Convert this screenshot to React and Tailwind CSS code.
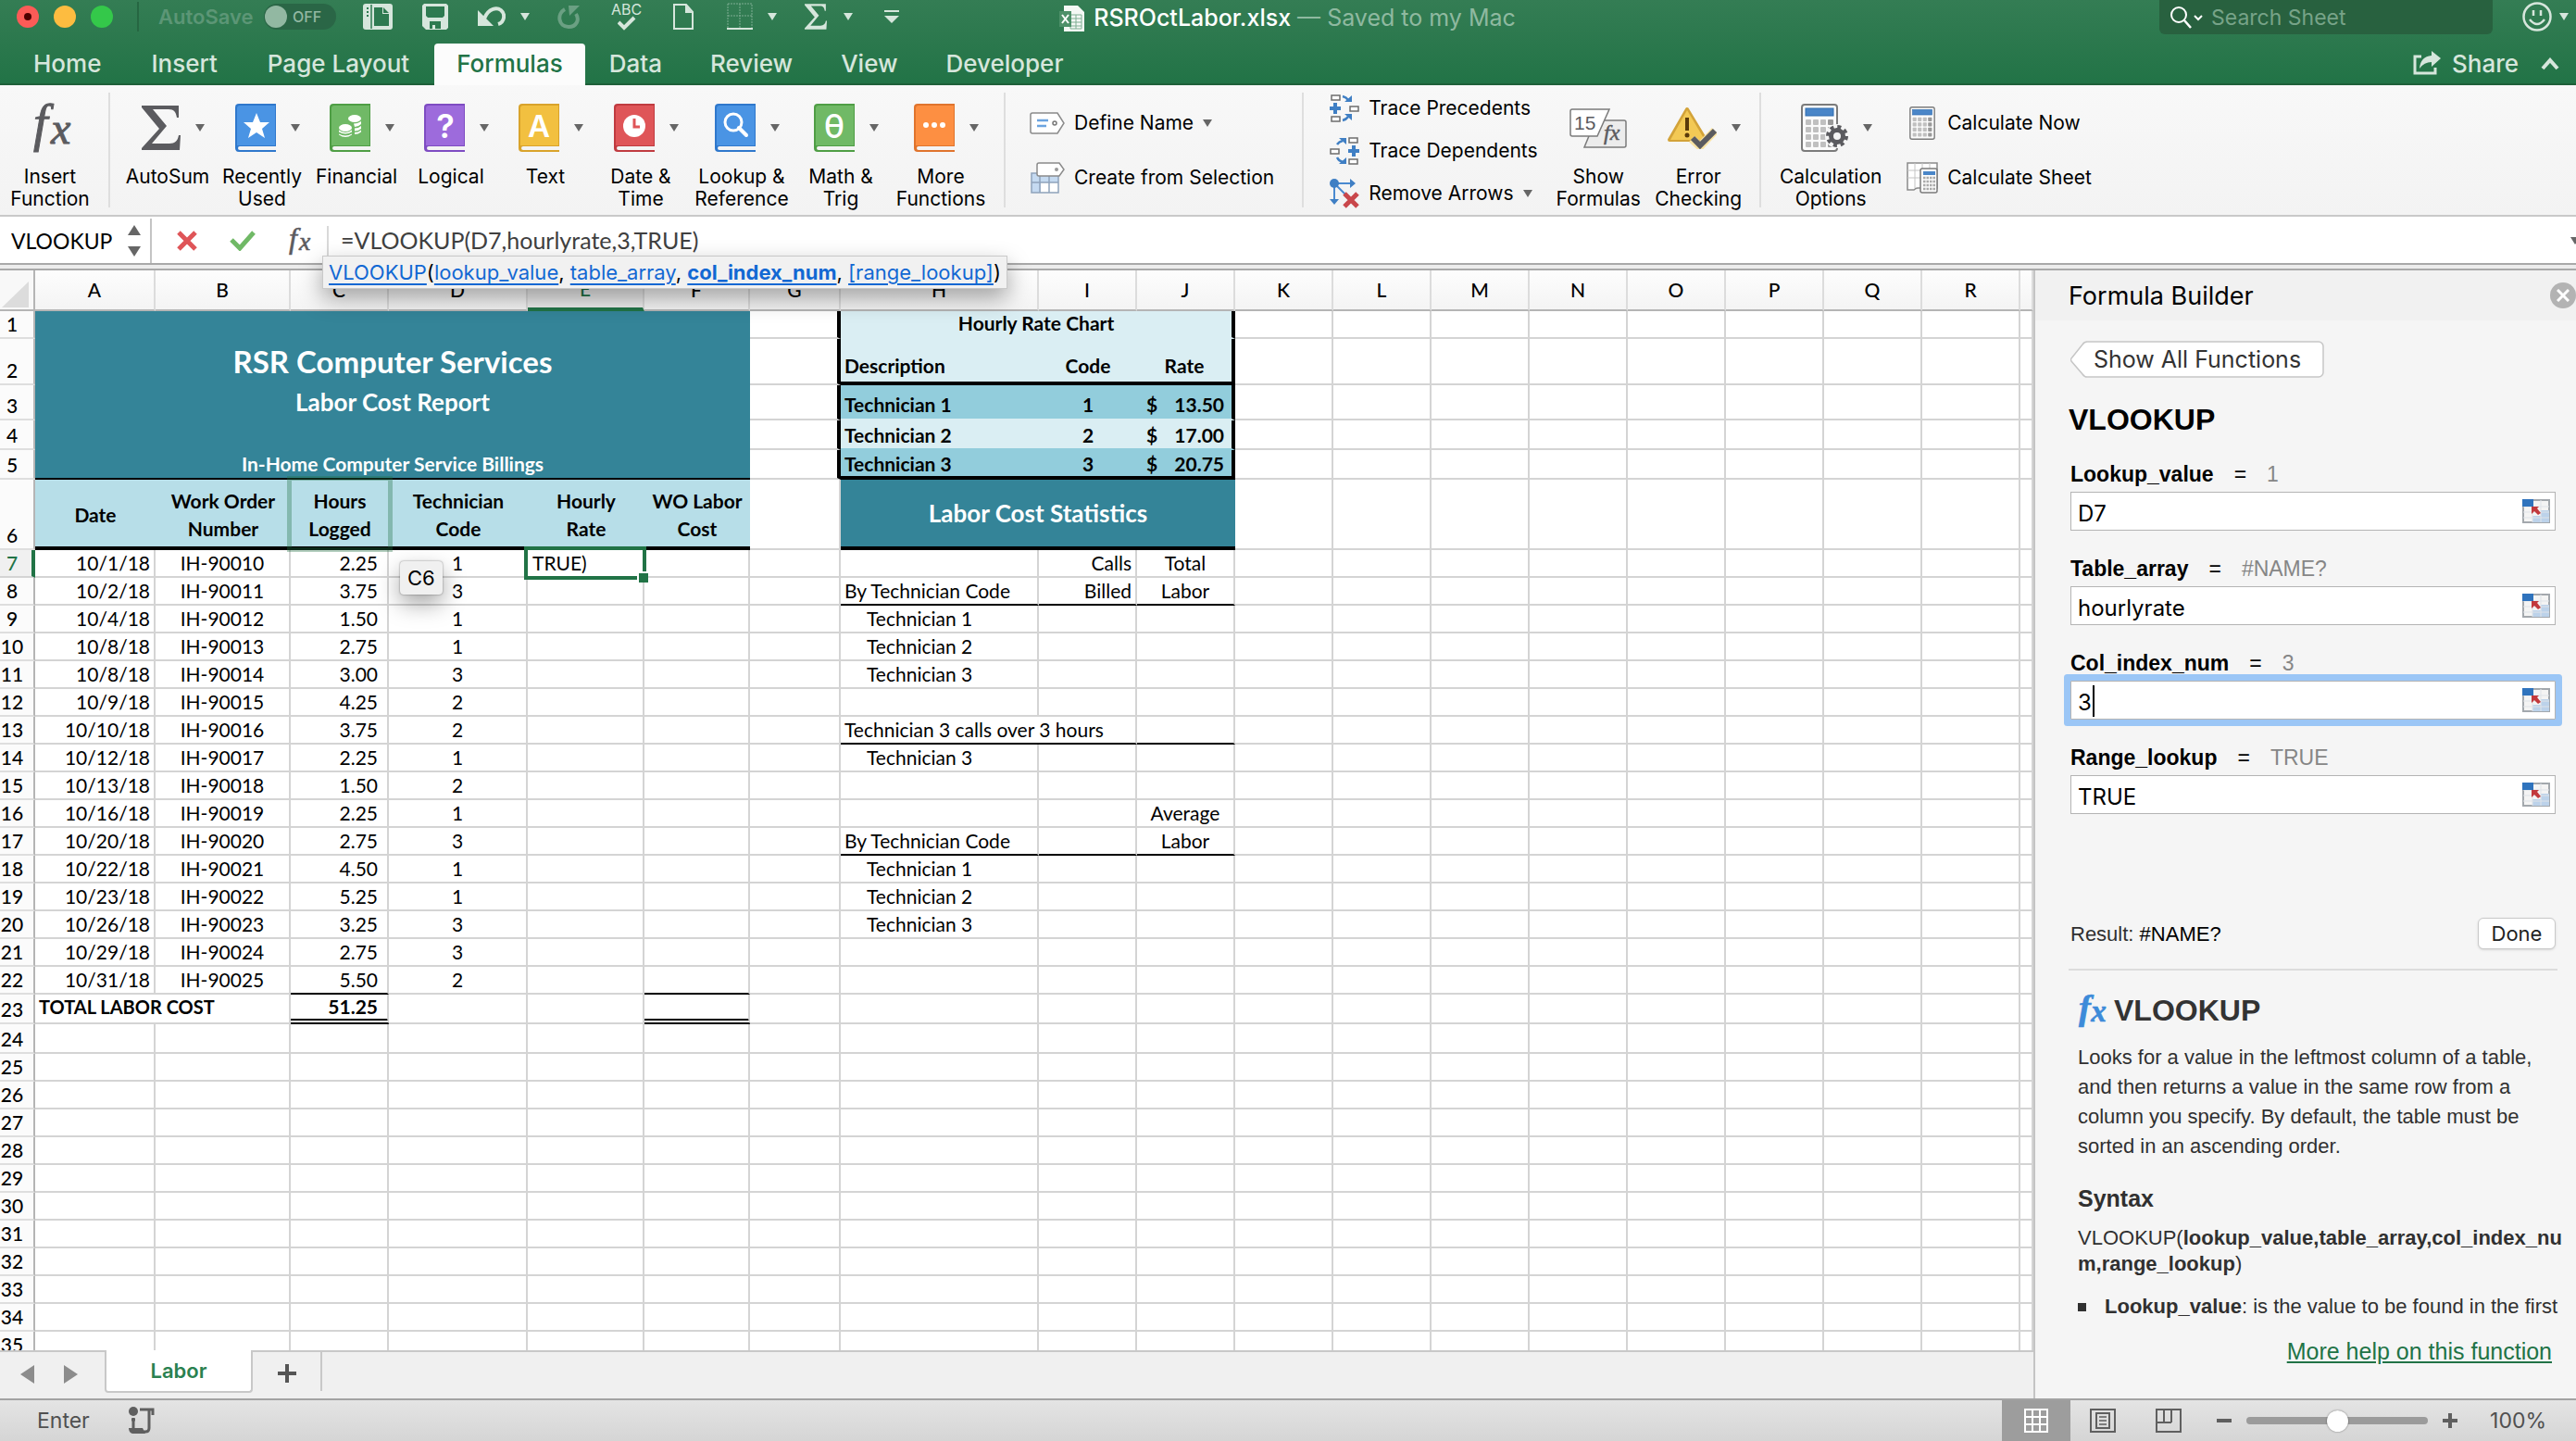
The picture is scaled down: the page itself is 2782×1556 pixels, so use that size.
import React from 'react';

const COLUMNS = [
  { id: 'A', w: 'w-[130px]' },
  { id: 'B', w: 'w-[146px]' },
  { id: 'C', w: 'w-[106px]' },
  { id: 'D', w: 'w-[150px]' },
  { id: 'E', w: 'w-[126px]' },
  { id: 'F', w: 'w-[114px]' },
  { id: 'G', w: 'w-[98px]' },
  { id: 'H', w: 'w-[214px]' },
  { id: 'I', w: 'w-[106px]' },
  { id: 'J', w: 'w-[106px]' },
  { id: 'K', w: 'w-[106px]' },
  { id: 'L', w: 'w-[106px]' },
  { id: 'M', w: 'w-[106px]' },
  { id: 'N', w: 'w-[106px]' },
  { id: 'O', w: 'w-[106px]' },
  { id: 'P', w: 'w-[106px]' },
  { id: 'Q', w: 'w-[106px]' },
  { id: 'R', w: 'w-[106px]' },
  { id: '', w: '' },
];

const ROW_HEIGHTS = {
  2: 'h-[50px]',
  3: 'h-[38px]',
  4: 'h-8',
  5: 'h-8',
  6: 'h-[76px]',
  23: 'h-8',
  24: 'h-8',
};

const GRID = 'border-r-2 border-b-2 border-[#d4d4d4]';
const LINE_BELOW = 'border-r-2 border-b-2 border-r-[#d4d4d4] border-b-black';
const TEAL = 'border-b-2 border-[#348498] bg-[#348498] text-white font-bold text-center';
const HEAD = 'border-b-4 border-black bg-[#b7dee8] font-bold text-center !align-middle !leading-[30px] pt-1';
const G_EDGE = 'border-r-4 border-b-2 border-r-black border-b-[#d4d4d4]';
const BOX_RIGHT = 'border-r-4 border-b-2 border-r-black';
const TOTAL = 'border-r-2 border-r-[#d4d4d4] border-b-[6px] border-b-black [border-bottom-style:double] !pb-0';

const workOrders = [
  ['10/1/18', 'IH-90010', '2.25', '1'],
  ['10/2/18', 'IH-90011', '3.75', '3'],
  ['10/4/18', 'IH-90012', '1.50', '1'],
  ['10/8/18', 'IH-90013', '2.75', '1'],
  ['10/8/18', 'IH-90014', '3.00', '3'],
  ['10/9/18', 'IH-90015', '4.25', '2'],
  ['10/10/18', 'IH-90016', '3.75', '2'],
  ['10/12/18', 'IH-90017', '2.25', '1'],
  ['10/13/18', 'IH-90018', '1.50', '2'],
  ['10/16/18', 'IH-90019', '2.25', '1'],
  ['10/20/18', 'IH-90020', '2.75', '3'],
  ['10/22/18', 'IH-90021', '4.50', '1'],
  ['10/23/18', 'IH-90022', '5.25', '1'],
  ['10/26/18', 'IH-90023', '3.25', '3'],
  ['10/29/18', 'IH-90024', '2.75', '3'],
  ['10/31/18', 'IH-90025', '5.50', '2'],
];

const Money = ({ children }) => (
  <span className="flex justify-between pl-[10px] pr-2">
    <span>$</span>
    <span>{children}</span>
  </span>
);

const tech = (n) => ({ t: `Technician ${n}`, c: 'pl-7' });

const cells = {
  1: {
    A: { span: 6, b: TEAL },
    G: { b: G_EDGE },
    H: { span: 3, t: 'Hourly Rate Chart', b: `${BOX_RIGHT} border-b-[#daeef3] bg-[#daeef3]`, c: 'font-bold text-center !pb-[2px]' },
  },
  2: {
    A: { span: 6, t: 'RSR Computer Services', b: TEAL, c: 'text-[33px] !align-middle' },
    G: { b: G_EDGE },
    H: { t: 'Description', b: 'border-b-4 border-black bg-[#daeef3]', c: 'font-bold pl-1 !pb-1' },
    I: { t: 'Code', b: 'border-b-4 border-black bg-[#daeef3]', c: 'font-bold text-center !pb-1' },
    J: { t: 'Rate', b: 'border-b-4 border-r-4 border-black bg-[#daeef3]', c: 'font-bold text-center !pb-1' },
  },
  3: {
    A: { span: 6, t: 'Labor Cost Report', b: TEAL, c: 'text-[26px] !align-middle' },
    G: { b: G_EDGE },
    H: { t: 'Technician 1', b: 'border-b-2 border-[#daeef3] bg-[#92cddc]', c: 'font-bold pl-1 !pb-[2px]' },
    I: { t: '1', b: 'border-b-2 border-[#daeef3] bg-[#92cddc]', c: 'font-bold text-center !pb-[2px]' },
    J: { t: <Money>13.50</Money>, b: `${BOX_RIGHT} border-b-[#daeef3] bg-[#92cddc]`, c: 'font-bold !pb-[2px]' },
  },
  4: {
    A: { span: 6, b: TEAL },
    G: { b: G_EDGE },
    H: { t: 'Technician 2', b: 'border-b-2 border-[#92cddc] bg-[#daeef3]', c: 'font-bold pl-1' },
    I: { t: '2', b: 'border-b-2 border-[#92cddc] bg-[#daeef3]', c: 'font-bold text-center' },
    J: { t: <Money>17.00</Money>, b: `${BOX_RIGHT} border-b-[#92cddc] bg-[#daeef3]`, c: 'font-bold' },
  },
  5: {
    A: { span: 6, t: 'In-Home Computer Service Billings', b: 'border-b-2 border-black bg-[#348498] text-white font-bold text-center !pb-[2px]' },
    G: { b: G_EDGE },
    H: { t: 'Technician 3', b: 'border-b-4 border-black bg-[#92cddc]', c: 'font-bold pl-1 !pb-0' },
    I: { t: '3', b: 'border-b-4 border-black bg-[#92cddc]', c: 'font-bold text-center !pb-0' },
    J: { t: <Money>20.75</Money>, b: 'border-b-4 border-r-4 border-black bg-[#92cddc]', c: 'font-bold !pb-0' },
  },
  6: {
    A: { t: 'Date', b: HEAD },
    B: { t: <>Work Order<br />Number</>, b: HEAD },
    C: {
      t: (
        <>
          Hours<br />Logged
          <span className="absolute -inset-x-1 -top-1 -bottom-[6px] border-[5px] border-[#217346]/35" />
        </>
      ),
      b: HEAD,
      c: 'relative',
    },
    D: { t: <>Technician<br />Code</>, b: HEAD },
    E: { t: <>Hourly<br />Rate</>, b: HEAD },
    F: { t: <>WO Labor<br />Cost</>, b: HEAD },
    H: { span: 3, t: 'Labor Cost Statistics', b: 'border-b-4 border-black bg-[#348498] text-white', c: 'font-bold text-center text-[26px] !align-middle' },
  },
  7: {
    D: {
      t: (
        <>
          1
          <span className="absolute left-3 top-3 rounded-sm bg-[#f0f0f0] px-2 py-[5px] font-[Inter,sans-serif] text-[22px] leading-[26px] shadow-[0_0_2px_rgba(0,0,0,.5),0_10px_24px_rgba(0,0,0,.35)]">
            C6
          </span>
        </>
      ),
      c: 'text-center relative',
    },
    E: {
      t: (
        <>
          TRUE)
          <span className="absolute -inset-x-1 -top-1 -bottom-1 border-4 border-[#217346]" />
          <span className="absolute -bottom-[7px] -right-[6px] size-3 border-l-2 border-t-2 border-white bg-[#217346]" />
        </>
      ),
      c: 'relative pl-[5px]',
    },
    I: { t: 'Calls', c: 'text-right pr-1' },
    J: { t: 'Total', c: 'text-center' },
  },
  8: {
    H: { t: 'By Technician Code', b: LINE_BELOW, c: 'pl-1' },
    I: { t: 'Billed', b: LINE_BELOW, c: 'text-right pr-1' },
    J: { t: 'Labor', b: LINE_BELOW, c: 'text-center' },
  },
  9: { H: tech(1) },
  10: { H: tech(2) },
  11: { H: tech(3) },
  13: {
    H: { span: 2, t: 'Technician 3 calls over 3 hours', b: LINE_BELOW, c: 'pl-1' },
    J: { b: LINE_BELOW },
  },
  14: { H: tech(3) },
  16: { J: { t: 'Average', c: 'text-center' } },
  17: {
    H: { t: 'By Technician Code', b: LINE_BELOW, c: 'pl-1' },
    I: { b: LINE_BELOW },
    J: { t: 'Labor', b: LINE_BELOW, c: 'text-center' },
  },
  18: { H: tech(1) },
  19: { H: tech(2) },
  20: { H: tech(3) },
  22: { F: { b: LINE_BELOW } },
  23: {
    A: { span: 2, t: 'TOTAL LABOR COST', c: 'font-bold pl-1 text-[20px] !pb-1' },
    C: { t: '51.25', b: TOTAL, c: 'font-bold text-right pr-[10px]' },
    F: { b: TOTAL },
  },
};

workOrders.forEach(([date, order, hours, code], i) => {
  const n = i + 7;
  cells[n] = {
    A: { t: date, c: 'text-right pr-1' },
    B: { t: order, c: 'text-center' },
    C: { t: hours, b: n === 22 ? LINE_BELOW : GRID, c: 'text-right pr-[10px]' },
    D: { t: code, c: 'text-center' },
    ...cells[n],
  };
});

const Caret = ({ className = 'border-t-[#666]' }) => (
  <span className={`inline-block border-x-[5px] border-t-8 border-x-transparent ${className}`} />
);

const FxIcon = ({ className, fill = '#5b5b5f' }) => (
  <svg viewBox="0 0 50 52" className={`overflow-visible ${className}`} aria-hidden="true">
    <g fill={fill} stroke={fill} strokeWidth="1" fontFamily="Liberation Serif, serif" fontStyle="italic">
      <text x="7" y="40" fontSize="56">f</text>
      <text x="26" y="43" fontSize="48">x</text>
    </g>
  </svg>
);

const Sigma = ({ className, fill }) => (
  <svg viewBox="0 0 42 48" className={className} aria-hidden="true">
    <path fill={fill} d="M0 0h40v13h-2c-1-6-3-9-9-9H12l15 18L11 41h19c6 0 9-3 10-9h2l-1 16H0v-2l19-21L0 2z" />
  </svg>
);

const Book = ({ fill, edge, children }) => (
  <svg viewBox="0 0 44 52" className="h-[52px] w-11" aria-hidden="true">
    <path fill={edge} d="M4 0h40v52H4a4 4 0 0 1-4-4V4a4 4 0 0 1 4-4z" />
    <path fill={fill} d="M5 2h38v43H2V5a3 3 0 0 1 3-3z" />
    <path fill="#f4f4f4" d="M5 46h39v4H5a2 2 0 0 1 0-4z" />
    {children}
  </svg>
);

const glyph = { fill: '#fff', fontFamily: 'Inter, sans-serif', textAnchor: 'middle' };

const functionGroups = [
  { w: 'w-[102px]', label: ['AutoSum'], icon: <Sigma fill="#5b5b5f" className="h-12 w-[42px]" /> },
  {
    w: 'w-[102px]',
    label: ['Recently', 'Used'],
    icon: (
      <Book fill="#4a94e4" edge="#2f78cc">
        <path fill="#fff" d="M23 10l4 10h10l-8 7 3 10-9-6-9 6 3-10-8-7h10z" />
      </Book>
    ),
  },
  {
    w: 'w-[102px]',
    label: ['Financial'],
    icon: (
      <Book fill="#70b966" edge="#4f9e45">
        <g fill="#fff">
          <ellipse cx="27" cy="16" rx="7" ry="4" />
          <path d="M26 21.500q4 0 8-2.500v3q-3 3-7 3zM27 26.500q4 0 7-2.500v3q-3 2.500-7 2.500zM27 31q4 0 7-2.500v2q-3 2.500-7 2.500z" />
          <ellipse cx="17" cy="26" rx="7" ry="4" />
          <path d="M10 28.500q7 5 14 0v2q-7 4-14 0zM10 32.500q7 4 14 0v1q-7 5-14 0z" />
        </g>
      </Book>
    ),
  },
  {
    w: 'w-[102px]',
    label: ['Logical'],
    icon: (
      <Book fill="#9d6bdc" edge="#7e4cc2">
        <text x="23" y="37" fontSize="36" fontWeight="600" {...glyph}>?</text>
      </Book>
    ),
  },
  {
    w: 'w-[102px]',
    label: ['Text'],
    icon: (
      <Book fill="#f2c040" edge="#d9a32b">
        <text x="22" y="36" fontSize="33" fontWeight="600" {...glyph}>A</text>
      </Book>
    ),
  },
  {
    w: 'w-[104px]',
    label: ['Date &', 'Time'],
    icon: (
      <Book fill="#df5558" edge="#c03b40">
        <circle cx="22" cy="24" r="12" fill="#fff" />
        <path d="M22 16v9h6" fill="none" stroke="#df5558" strokeWidth="3" />
      </Book>
    ),
  },
  {
    w: 'w-[114px]',
    label: ['Lookup &', 'Reference'],
    icon: (
      <Book fill="#4a94e4" edge="#2f78cc">
        <circle cx="20" cy="20" r="9" fill="none" stroke="#fff" strokeWidth="3" />
        <path d="M26 26l8 8" stroke="#fff" strokeWidth="4" strokeLinecap="round" />
      </Book>
    ),
  },
  {
    w: 'w-[100px]',
    label: ['Math &', 'Trig'],
    icon: (
      <Book fill="#70b966" edge="#4f9e45">
        <text x="22" y="37" fontSize="36" fontWeight="500" {...glyph}>θ</text>
      </Book>
    ),
  },
  {
    w: 'w-[116px]',
    label: ['More', 'Functions'],
    icon: (
      <Book fill="#fd8f42" edge="#e0742d">
        <g fill="#fff">
          <circle cx="13" cy="23" r="3" />
          <circle cx="22" cy="23" r="3" />
          <circle cx="31" cy="23" r="3" />
        </g>
      </Book>
    ),
  },
];

const BigButton = ({ w, label, icon, caret = true }) => (
  <button className={`flex shrink-0 flex-col items-center pt-5 ${w}`}>
    <span className={`flex h-[52px] items-center justify-center gap-4 ${caret ? 'pl-3' : ''}`}>
      {icon}
      {caret && <Caret />}
    </span>
    <span className="mt-[15px] text-center text-[21px] leading-6">
      {label.map((line) => (
        <span key={line} className="block whitespace-nowrap">{line}</span>
      ))}
    </span>
  </button>
);

const SmallButton = ({ icon, children, caret }) => (
  <button className="flex items-center gap-[10px] whitespace-nowrap text-[21px] leading-6">
    {icon}
    {children}
    {caret && <Caret />}
  </button>
);

const Separator = () => <span className="mt-2 h-[124px] w-[2px] shrink-0 bg-[#dedede]" />;

const Calculator = ({ className, viewBox = '0 0 51 52', children }) => (
  <svg viewBox={viewBox} className={className} aria-hidden="true">
    <rect x="1" y="1" width="38" height="50" rx="3" fill="#fbfbfb" stroke="#7b7b7b" strokeWidth="2" />
    <rect x="5" y="5" width="30" height="8" fill="#4a86c8" stroke="#2f6cb0" strokeWidth="1" />
    {[17, 25, 33, 41].map((y) =>
      [5, 13, 21, 29].map((x) => (
        <rect key={`${x}-${y}`} x={x} y={y} width="6" height="6" rx="1" fill={x === 29 ? '#9a9a9a' : '#c0c0c0'} />
      ))
    )}
    {children}
  </svg>
);

const TraceIcon = ({ flip }) => (
  <svg viewBox="0 0 32 32" className="size-8 shrink-0" aria-hidden="true">
    <g transform={flip ? 'translate(32 0) scale(-1 1)' : undefined} fill="#fff" stroke="#6d6d6d" strokeWidth="1.5">
      <rect x="2" y="2" width="9" height="5" />
      <rect x="2" y="25" width="9" height="5" />
      <rect x="22" y="14" width="9" height="5" />
    </g>
    <path fill="#3f7fc4" d={flip ? 'M24 10h4v4h4v4h-4v4h-4v-4h-4v-4h4z' : 'M4 10h4v4h4v4H8v4H4v-4H0v-4h4z'} />
    {flip ? (
      <g>
        <path d="M8 9q2-3 6-4M8 23q2 4 6 5" fill="none" stroke="#3f7fc4" strokeWidth="2.5" />
        <path fill="#3f7fc4" d="M10 2h8v7zM18 23v7h-8z" />
      </g>
    ) : (
      <g>
        <path d="M14 3q4 1 6 4M14 29q4-1 6-4" fill="none" stroke="#3f7fc4" strokeWidth="2.5" />
        <path fill="#3f7fc4" d="M24 2v7h-8zM16 22h8v7z" />
      </g>
    )}
  </svg>
);

const RemoveArrowsIcon = () => (
  <svg viewBox="0 0 32 32" className="size-8 shrink-0" aria-hidden="true">
    <g stroke="#4a8ad0" strokeWidth="2" fill="none">
      <path d="M5 5h18M5 5v19M5 5l12 12" />
    </g>
    <circle cx="5" cy="5" r="5" fill="#3f7fc4" />
    <path fill="#3f7fc4" d="M22 0l6 5-6 5zM0 22h10l-5 6z" />
    <path d="M16 16l14 14M30 16L16 30" stroke="#c9474b" strokeWidth="5" />
  </svg>
);

const DefineNameIcon = () => (
  <svg viewBox="0 0 38 24" className="h-6 w-[38px] shrink-0" aria-hidden="true">
    <path d="M3 1h27l7 11-7 11H3a2 2 0 0 1-2-2V3a2 2 0 0 1 2-2z" fill="#fff" stroke="#8a8a8a" strokeWidth="1.5" />
    <path d="M8 9h12M8 15h10" stroke="#6ba4e0" strokeWidth="2.5" />
    <circle cx="27" cy="12" r="2" fill="none" stroke="#777" strokeWidth="1.5" />
  </svg>
);

const CreateFromSelectionIcon = () => (
  <svg viewBox="0 0 38 34" className="h-[34px] w-[38px] shrink-0" aria-hidden="true">
    <path d="M2 12h29v21H2z" fill="#fff" />
    <path d="M2 12h29v10H2zM2 22h10v11H2z" fill="#c5daf1" />
    <path d="M2 12h29v21H2zM2 22h29M11 12v21M21 12v21" fill="none" stroke="#8fa3bb" strokeWidth="1.5" />
    <path d="M10 1h22l5 7-5 7H10a2 2 0 0 1-2-2V3a2 2 0 0 1 2-2z" fill="#fff" stroke="#8a8a8a" strokeWidth="1.5" />
    <circle cx="29" cy="8" r="2" fill="#999" />
  </svg>
);

const ShowFormulasIcon = () => (
  <svg viewBox="0 0 62 43" className="h-[43px] w-[62px]" aria-hidden="true">
    <path d="M28 13h31a2 2 0 0 1 2 2v25a2 2 0 0 1-2 2H16z" fill="#ececec" stroke="#7b7b7b" strokeWidth="1.5" />
    <path d="M3 1h40L30 30H3a2 2 0 0 1-2-2V3a2 2 0 0 1 2-2z" fill="#fff" stroke="#7b7b7b" strokeWidth="1.5" />
    <text x="5" y="23" fontSize="21" fontWeight="500" fill="#5b5b5f" fontFamily="Liberation Sans, sans-serif">15</text>
    <text x="37" y="34" fontSize="24" fill="#5b5b5f" fontStyle="italic" fontFamily="Liberation Serif, serif" stroke="#5b5b5f" strokeWidth=".5">fx</text>
  </svg>
);

const ErrorCheckingIcon = () => (
  <svg viewBox="0 0 54 46" className="h-[46px] w-[54px]" aria-hidden="true">
    <path d="M22 3L42 36H3z" fill="#f3c955" stroke="#d3a339" strokeWidth="4" strokeLinejoin="round" />
    <path d="M22 4L41 36H4z" fill="#f3c955" />
    <path d="M22 12v14" stroke="#5a3a0a" strokeWidth="4" />
    <circle cx="22" cy="31" r="2.5" fill="#5a3a0a" />
    <path d="M27 35l9 8 16-17" fill="none" stroke="#f9e3a4" strokeWidth="9" />
    <path d="M28 34l8 8 16-16" fill="none" stroke="#5b5b5f" strokeWidth="6" />
  </svg>
);

const CalculateSheetIcon = () => (
  <svg viewBox="0 0 34 34" className="size-[34px] shrink-0" aria-hidden="true">
    <path d="M1 1h32v27H12q-2 0-4 2H1z" fill="#fff" stroke="#8a8a8a" strokeWidth="1.5" />
    <path d="M1 9h32M1 17h32M9 1v27M17 1v27M25 1v8" stroke="#c4c4c4" />
    <rect x="15" y="7" width="18" height="26" rx="2" fill="#fbfbfb" stroke="#7b7b7b" strokeWidth="1.5" />
    <rect x="18" y="10" width="13" height="4" fill="#4a86c8" />
    {[17, 21, 25, 29].map((y) => (
      <path key={y} d={`M18 ${y}h13`} stroke="#aaa" strokeWidth="2.5" strokeDasharray="2.5 1" />
    ))}
  </svg>
);

const TitleBar = () => (
  <div className="flex h-10 items-start">
    <div className="flex h-9 items-center gap-4 pl-[18px]">
      <button aria-label="Close" className="flex size-6 items-center justify-center rounded-full bg-[#fc5b57]">
        <span className="size-2 rounded-full bg-[#4d0000]" />
      </button>
      <button aria-label="Minimize" className="size-6 rounded-full bg-[#fdbc40]" />
      <button aria-label="Zoom" className="size-6 rounded-full bg-[#34c84a]" />
      <span className="ml-[10px] h-8 w-[2px] bg-[#266642]" />
      <label htmlFor="autosave" className="ml-[5px] w-[102px] text-[22px] font-semibold text-[#5c9676]">
        AutoSave
      </label>
      <span className="relative -ml-1 flex h-7 w-[78px] items-center rounded-full bg-[#2a6646]">
        <input id="autosave" type="checkbox" role="switch" className="size-6 appearance-none rounded-full bg-[#92b8a2] ml-[1px]" />
        <span className="ml-[6px] text-[16px] font-medium text-[#92b8a2]">OFF</span>
      </span>
    </div>

    <div className="flex h-9 items-center pl-[29px] text-[#d6e6dc]">
      <button aria-label="Gallery">
        <svg viewBox="0 0 32 28" className="h-7 w-8">
          <rect width="32" height="28" rx="3" fill="currentColor" />
          <path d="M12 4h9v7h7v13H12zM22 4l6 6h-6z" fill="#2d7a50" />
          <path d="M9 1v26" stroke="#2d7a50" strokeWidth="1.5" />
          <path d="M5 4v12" stroke="#2d7a50" strokeWidth="2" strokeDasharray="2 2" />
        </svg>
      </button>
      <button aria-label="Save" className="ml-8">
        <svg viewBox="0 0 28 28" className="size-7">
          <path d="M2 0h24l2 2v24l-2 2H4l-4-4V2z" fill="currentColor" />
          <path d="M4 3h20v10l-2 2H6l-2-2zM8 27v-8h12v8h-6v-4h-3v4z" fill="#2d7a50" />
        </svg>
      </button>
      <button aria-label="Undo" className="ml-8 flex items-center gap-4">
        <svg viewBox="0 0 30 24" className="h-6 w-[30px]">
          <path d="M0 5v17h17z" fill="currentColor" />
          <path d="M7 14C12 2 21 2 25 5c5 4 4 13-3 15" fill="none" stroke="currentColor" strokeWidth="4" />
        </svg>
        <Caret className="border-t-[#d6e6dc]" />
      </button>
      <button aria-label="Redo" className="ml-[30px] text-[#6ba083]">
        <svg viewBox="0 0 24 28" className="h-7 w-6">
          <path d="M12 2h12L13 13z" fill="currentColor" />
          <path d="M8 6c-9 5-7 19 4 19 9 0 12-8 8-14" fill="none" stroke="currentColor" strokeWidth="4" />
        </svg>
      </button>
      <button aria-label="Spelling" className="ml-[34px] flex flex-col items-center">
        <span className="text-[16px] leading-[14px]">ABC</span>
        <svg viewBox="0 0 20 16" className="h-4 w-5">
          <path d="M1 7l6 6L18 2" fill="none" stroke="currentColor" strokeWidth="4" />
        </svg>
      </button>
      <button aria-label="New" className="ml-[34px]">
        <svg viewBox="0 0 22 28" className="h-7 w-[22px]">
          <path d="M1 1h13l7 8v18H1z" fill="none" stroke="currentColor" strokeWidth="2" />
          <path d="M13 1v9h8z" fill="currentColor" />
        </svg>
      </button>
      <button aria-label="Borders" className="ml-9 flex items-center gap-4">
        <svg viewBox="0 0 28 30" className="h-[30px] w-7">
          <path d="M1 1h26v26M1 1v26M14 1v26M1 14h26" fill="none" stroke="#7fae93" strokeDasharray="2 1" />
          <path d="M0 28h28" stroke="currentColor" strokeWidth="2" />
        </svg>
        <Caret className="border-t-[#d6e6dc]" />
      </button>
      <button aria-label="Sum" className="ml-[30px] flex items-center gap-[18px]">
        <Sigma fill="#d6e6dc" className="h-7 w-6" />
        <Caret className="border-t-[#d6e6dc]" />
      </button>
      <button aria-label="Customize toolbar" className="ml-[34px] flex flex-col items-center gap-1">
        <span className="h-[2px] w-4 bg-[#d6e6dc]" />
        <span className="inline-block border-x-8 border-t-8 border-x-transparent border-t-[#d6e6dc]" />
      </button>
    </div>

    <div className="flex h-10 items-center pl-[173px] text-[25px]">
      <svg viewBox="0 0 28 30" className="mr-[9px] h-[30px] w-7" aria-hidden="true">
        <path d="M5 1h15l7 7v21H5z" fill="#f4f8f5" />
        <path d="M12 11h12v15H12zM12 15h12M12 19h12M12 23h12M18 11v15" fill="none" stroke="#7fae93" />
        <rect y="7" width="13" height="17" fill="#4d9069" />
        <path d="M3 11l7 9M10 11l-7 9" stroke="#fff" strokeWidth="2" />
      </svg>
      <span className="font-medium text-white">RSROctLabor.xlsx</span>
      <span className="whitespace-pre text-[#8fb9a0]"> — Saved to my Mac</span>
    </div>

    <div className="ml-auto flex items-start">
      <label className="flex h-[37px] w-[360px] items-center rounded-b-md bg-[#28613f] pl-3">
        <svg viewBox="0 0 36 24" className="h-6 w-9" aria-label="Search">
          <circle cx="9" cy="9" r="8" fill="none" stroke="#fff" strokeWidth="2" />
          <path d="M15 15l7 8" stroke="#fff" strokeWidth="2.5" />
          <path d="M26 10l4 4 4-4" fill="none" stroke="#fff" strokeWidth="2" />
        </svg>
        <input
          placeholder="Search Sheet"
          className="ml-2 min-w-0 flex-1 bg-transparent text-[23px] leading-7 outline-none placeholder:text-[#77a388]"
        />
      </label>
      <button aria-label="Feedback" className="ml-8 mr-2 mt-[2px] flex items-center gap-2">
        <svg viewBox="0 0 32 32" className="size-8" fill="none" stroke="#d6e6dc" strokeWidth="2.5">
          <circle cx="16" cy="16" r="14.5" />
          <path d="M12 9v6M20 9v6M8 19q8 10 16 0" />
        </svg>
        <Caret className="border-t-[#d6e6dc]" />
      </button>
    </div>
  </div>
);

const RibbonTabs = () => (
  <nav className="mt-2 flex h-11 items-center border-b-2 border-[#1f6039] pl-[9px] text-[26px] font-medium text-[#d6e6dc]">
    {['Home', 'Insert', 'Page Layout'].map((tab) => (
      <button key={tab} className="px-[27px] pb-[2px]">{tab}</button>
    ))}
    <button className="mt-[2px] h-[46px] rounded-t bg-[#fcfcfc] px-6 pb-1 text-[#217346]">Formulas</button>
    {['Data', 'Review', 'View', 'Developer'].map((tab) => (
      <button key={tab} className="px-[26px] pb-[2px]">{tab}</button>
    ))}
    <button className="ml-auto flex items-center gap-3 pb-[2px]">
      <svg viewBox="0 0 30 26" className="h-[26px] w-[30px]" aria-hidden="true">
        <path d="M9 6H2v18h22v-6" fill="none" stroke="currentColor" strokeWidth="3" />
        <path d="M20 0l10 8-10 9v-5q-8 0-13 7Q8 6 20 5z" fill="currentColor" />
      </svg>
      Share
    </button>
    <button aria-label="Collapse ribbon" className="ml-6 mr-[18px]">
      <svg viewBox="0 0 20 14" className="h-[14px] w-5">
        <path d="M2 12l8-9 8 9" fill="none" stroke="currentColor" strokeWidth="4" />
      </svg>
    </button>
  </nav>
);

const Ribbon = () => (
  <div className="flex h-[142px] items-start border-b-2 border-[#c9c9c9] bg-gradient-to-b from-[#f8f8f8] to-[#f3f3f3]">
    <BigButton w="w-[108px]" label={['Insert', 'Function']} caret={false} icon={<FxIcon className="h-[52px] w-[50px]" />} />
    <span className="w-[9px]" />
    <Separator />
    <span className="w-[11px]" />
    {functionGroups.map((g) => (
      <BigButton key={g.label[0]} {...g} />
    ))}
    <span className="w-[10px]" />
    <Separator />
    <div className="flex flex-col gap-[30px] pl-[26px] pt-[29px]">
      <SmallButton icon={<DefineNameIcon />} caret>Define Name</SmallButton>
      <SmallButton icon={<CreateFromSelectionIcon />}>Create from Selection</SmallButton>
    </div>
    <span className="w-[30px]" />
    <Separator />
    <div className="flex w-[254px] shrink-0 flex-col gap-[14px] pl-7 pt-[9px]">
      <SmallButton icon={<TraceIcon />}>Trace Precedents</SmallButton>
      <SmallButton icon={<TraceIcon flip />}>Trace Dependents</SmallButton>
      <SmallButton icon={<RemoveArrowsIcon />} caret>Remove Arrows</SmallButton>
    </div>
    <span className="w-[10px]" />
    <BigButton w="w-[108px]" label={['Show', 'Formulas']} caret={false} icon={<ShowFormulasIcon />} />
    <BigButton w="w-[108px]" label={['Error', 'Checking']} icon={<ErrorCheckingIcon />} />
    <span className="w-[12px]" />
    <Separator />
    <span className="w-[13px]" />
    <BigButton
      w="w-[124px]"
      label={['Calculation', 'Options']}
      icon={
        <Calculator className="h-[52px] w-[51px]">
          <circle cx="39" cy="35" r="9" fill="none" stroke="#f5f5f5" strokeWidth="8" />
          <circle cx="39" cy="35" r="6.5" fill="#f5f5f5" stroke="#5b5b5f" strokeWidth="5" />
          <circle cx="39" cy="35" r="10" fill="none" stroke="#5b5b5f" strokeWidth="4" strokeDasharray="4 3.85" />
        </Calculator>
      }
    />
    <div className="flex flex-col gap-6 pl-5 pt-[23px]">
      <SmallButton icon={<Calculator viewBox="0 0 40 52" className="h-9 w-[34px] shrink-0" />}>Calculate Now</SmallButton>
      <SmallButton icon={<CalculateSheetIcon />}>Calculate Sheet</SmallButton>
    </div>
  </div>
);

const FormulaBar = () => (
  <div className="relative flex h-[58px] items-stretch border-b-2 border-[#a9a9a9] bg-[#ececec] pb-1">
    <div className="flex flex-1 items-center border-b-2 border-[#a9a9a9] bg-white pt-[2px]">
      <div className="flex h-full w-[164px] shrink-0 items-center border-r-2 border-[#c4c4c4] pl-3">
        <input
          aria-label="Name box"
          defaultValue="VLOOKUP"
          className="w-[126px] shrink-0 bg-transparent font-[Lato,sans-serif] text-[23px] outline-none"
        />
        <span className="flex flex-col items-center gap-3">
          <span className="border-x-[7px] border-b-[11px] border-x-transparent border-b-[#666]" />
          <span className="border-x-[7px] border-t-[11px] border-x-transparent border-t-[#666]" />
        </span>
      </div>
      <button aria-label="Cancel" className="ml-[27px]">
        <svg viewBox="0 0 22 22" className="size-[22px]">
          <path d="M2 2l18 18M20 2L2 20" stroke="#df5558" strokeWidth="5" />
        </svg>
      </button>
      <button aria-label="Accept" className="ml-[35px]">
        <svg viewBox="0 0 28 22" className="h-[22px] w-7">
          <path d="M2 10l9 9L26 2" fill="none" stroke="#70b966" strokeWidth="5" />
        </svg>
      </button>
      <button aria-label="Insert function" className="ml-8">
        <FxIcon className="h-[30px] w-[29px]" />
      </button>
      <span className="ml-4 h-8 w-[2px] bg-[#d9d9d9]" />
      <input
        aria-label="Formula"
        defaultValue="=VLOOKUP(D7,hourlyrate,3,TRUE)"
        className="ml-[13px] min-w-0 flex-1 bg-transparent font-[Lato,sans-serif] text-[25px] text-[#404040] outline-none"
      />
      <Caret className="border-t-[#666] -mr-1" />
    </div>
    <div className="absolute left-[348px] top-[42px] z-20 whitespace-nowrap border border-[#c9c9c9] bg-[#f1f1f1] px-[6px] text-[22px] leading-[34px] shadow-[0_10px_24px_rgba(0,0,0,.35)]">
      <a href="#vlookup" className="text-[#1268d3] underline underline-offset-4">VLOOKUP</a>(
      <a href="#lookup_value" className="text-[#1268d3] underline underline-offset-4">lookup_value</a>,{' '}
      <a href="#table_array" className="text-[#1268d3] underline underline-offset-4">table_array</a>,{' '}
      <a href="#col_index_num" className="font-bold text-[#1268d3] underline underline-offset-4">col_index_num</a>,{' '}
      <a href="#range_lookup" className="text-[#1268d3] underline underline-offset-4">[range_lookup]</a>)
    </div>
  </div>
);

const SheetRow = ({ n }) => {
  const row = cells[n] || {};
  const tds = [];
  for (let i = 0; i < COLUMNS.length; i++) {
    const { id } = COLUMNS[i];
    const cell = row[id] || {};
    const span = cell.span || 1;
    tds.push(
      <td key={i} colSpan={span} className={`whitespace-nowrap pb-[1px] align-bottom leading-[26px] ${cell.b || GRID} ${cell.c || ''}`}>
        {cell.t}
      </td>
    );
    i += span - 1;
  }
  return (
    <tr className={ROW_HEIGHTS[n] || 'h-[30px]'}>
      <th
        className={
          n === 7
            ? 'border-b-2 border-r-4 border-b-[#d4d4d4] border-r-[#217346] bg-[#f0f0f0] pb-[1px] align-bottom font-medium leading-[26px] text-[#217346]'
            : 'border-b-2 border-r-2 border-b-[#dedede] border-r-[#b5b5b5] bg-[#fbfbfb] pr-[10px] pb-[1px] align-bottom font-medium leading-[26px]'
        }
      >
        <span className={n === 7 ? 'pr-2' : ''}>{n}</span>
      </th>
      {tds}
    </tr>
  );
};

const Sheet = () => (
  <div className="min-h-0 flex-1 overflow-hidden bg-white">
    <table className="w-full table-fixed border-separate border-spacing-0 font-[Lato,sans-serif] text-[21px] text-black">
      <colgroup>
        <col className="w-[38px]" />
        {COLUMNS.map((c) => (
          <col key={c.id} className={c.w} />
        ))}
      </colgroup>
      <thead>
        <tr className="h-11">
          <th className="border-b-2 border-r-2 border-[#b5b5b5] bg-[#f8f8f8] align-bottom">
            <svg viewBox="0 0 36 34" className="h-[34px] w-9" aria-hidden="true">
              <path d="M2 32L31 4v28z" fill="#dcdcdc" />
            </svg>
          </th>
          {COLUMNS.map((c) => (
            <th
              key={c.id}
              className={
                c.id === 'E'
                  ? 'border-b-4 border-r-2 border-b-[#217346] border-r-[#dcdcdc] bg-[#ececec] font-medium text-[#217346]'
                  : 'border-b-2 border-r-2 border-b-[#b5b5b5] border-r-[#dcdcdc] bg-gradient-to-b from-[#fdfdfd] to-[#f4f4f4] font-medium'
              }
            >
              {c.id}
            </th>
          ))}
        </tr>
      </thead>
      <tbody>
        {Array.from({ length: 35 }, (_, i) => (
          <SheetRow key={i} n={i + 1} />
        ))}
      </tbody>
    </table>
  </div>
);

const SheetTabs = () => (
  <div className="flex h-[52px] shrink-0 items-start border-t-2 border-[#c8c8c8] bg-[#f0f0f0]">
    <button aria-label="Previous sheet" className="ml-[22px] mt-[14px] border-y-[10px] border-r-[15px] border-y-transparent border-r-[#8c8c8c]" />
    <button aria-label="Next sheet" className="ml-8 mt-[14px] border-y-[10px] border-l-[15px] border-y-transparent border-l-[#8c8c8c]" />
    <button className="-mt-[2px] ml-[29px] h-[46px] w-[160px] rounded-b border-x-2 border-b-2 border-[#c8c8c8] bg-white text-[22px] font-semibold text-[#2a8150]">
      Labor
    </button>
    <button aria-label="Add sheet" className="ml-[27px] mt-[13px]">
      <svg viewBox="0 0 20 20" className="size-5">
        <path d="M10 0v20M0 10h20" stroke="#555" strokeWidth="4" />
      </svg>
    </button>
    <span className="ml-[26px] h-[42px] w-[2px] bg-[#c8c8c8]" />
  </div>
);

const RangeIcon = () => (
  <svg viewBox="0 0 30 26" className="h-[26px] w-[30px]">
    <rect x="1" y="1" width="28" height="24" fill="#f4f4f4" stroke="#a3a8ad" strokeWidth="2" />
    <path d="M20 12h9v13H11v-7h9z" fill="#bcd2ea" />
    <path d="M11 1v24M20 1v24M1 8h28M1 14h28M1 20h28" stroke="#dfe3e8" />
    <rect width="12" height="8" fill="#2f73bd" />
    <path fill="#c2393d" d="M10 8h8l-2 2 4 5-3 2-4-4-3 3z" />
  </svg>
);

const args = [
  { id: 'Lookup_value', result: '1', value: 'D7' },
  { id: 'Table_array', result: '#NAME?', value: 'hourlyrate' },
  { id: 'Col_index_num', result: '3', value: '3', focused: true },
  { id: 'Range_lookup', result: 'TRUE', value: 'TRUE' },
];

const FormulaBuilder = () => (
  <aside className="flex w-[586px] shrink-0 flex-col overflow-hidden border-l-2 border-[#c4c4c4] bg-[#f5f5f5] font-['Liberation_Sans',Arial,sans-serif] text-[22px] text-[#303030]">
    <header className="flex h-[54px] shrink-0 items-center justify-between bg-[#f1f1f1] pl-9">
      <h2 className="pt-[2px] font-[Inter,sans-serif] text-[27px] text-black">Formula Builder</h2>
      <button aria-label="Close pane" className="flex size-7 items-center justify-center rounded-full bg-[#b3b3b3]">
        <svg viewBox="0 0 14 14" className="size-[14px]">
          <path d="M1 1l12 12M13 1L1 13" stroke="#fff" strokeWidth="3" />
        </svg>
      </button>
    </header>

    <div className="flex flex-col pl-[38px] pr-[22px]">
      <button className="relative mt-[22px] h-10 w-[274px] pt-[2px] text-[#333]">
        <svg viewBox="0 0 274 42" className="absolute left-0 top-0 h-[42px] w-[274px]" aria-hidden="true">
          <path d="M18 1h250a5 5 0 0 1 5 5v28a5 5 0 0 1-5 5H18q-3 0-5-3L1 22q-1-2 0-3L13 4q2-3 5-3z" fill="#fff" stroke="#c6c6c6" strokeWidth="1.5" />
        </svg>
        <span className="relative font-[Inter,sans-serif] text-[25px]">Show All Functions</span>
      </button>
      <h3 className="mt-[26px] -ml-[2px] text-[32px] font-bold leading-[38px] text-black">VLOOKUP</h3>

      <div className="mt-[27px] flex flex-col gap-7">
        {args.map((arg) => (
          <div key={arg.id} className="flex flex-col gap-[6px]">
            <div className="flex h-[26px] items-center gap-[22px] text-[23px]">
              <label htmlFor={arg.id} className="font-bold text-black">{arg.id}</label>
              <span className="text-black">=</span>
              <span className="text-[#868686]">{arg.result}</span>
            </div>
            <div
              className={
                arg.focused
                  ? 'relative flex h-[42px] items-center border border-[#b4b4b4] bg-white pl-[7px] pr-[5px] rounded-[1px] ring-[7px] ring-[#9bc6f6]'
                  : 'relative flex h-[42px] items-center border border-[#b4b4b4] bg-white pl-[7px] pr-[5px]'
              }
            >
              <input
                id={arg.id}
                defaultValue={arg.value}
                className="min-w-0 flex-1 bg-transparent pt-[6px] font-[Inter,sans-serif] text-[24px] leading-8 text-black outline-none"
              />
              {arg.focused && <span className="absolute left-[23px] top-1 h-[34px] w-[2px] bg-black" />}
              <button aria-label={`Select range for ${arg.id}`}>
                <RangeIcon />
              </button>
            </div>
          </div>
        ))}
      </div>

      <div className="mt-[112px] flex h-[34px] items-center justify-between">
        <p>
          Result: <output className="text-black">#NAME?</output>
        </p>
        <button className="h-[34px] w-[84px] rounded-md border border-[#c9c9c9] bg-white font-[Inter,sans-serif] text-[22px] leading-8 text-[#222] shadow-sm">
          Done
        </button>
      </div>
    </div>

    <hr className="ml-9 mr-5 mt-[21px] border-t-2 border-[#dcdcdc]" />

    <div className="pl-[46px] pr-[18px]">
      <h3 className="-ml-1 mt-6 flex items-center gap-2 text-[32px] font-bold leading-[38px] text-[#333]">
        <FxIcon className="h-[36px] w-[35px]" fill="#3d8bd9" />
        VLOOKUP
      </h3>
      <p className="mt-4 pr-4 leading-8">
        Looks for a value in the leftmost column of a table, and then returns a value in the same row from a column you
        specify. By default, the table must be sorted in an ascending order.
      </p>
      <h4 className="mt-6 text-[25px] font-bold leading-8">Syntax</h4>
      <p className="-mr-4 mt-[13px] break-all leading-7">
        VLOOKUP(<b>lookup_value,table_array,col_index_num,range_lookup</b>)
      </p>
      <ul className="mt-[18px]">
        <li className="flex items-center gap-5 whitespace-nowrap leading-7">
          <span className="size-[9px] bg-[#303030]" />
          <span>
            <b>Lookup_value</b>: is the value to be found in the first
          </span>
        </li>
      </ul>
      <p className="mt-[18px] pr-2 text-right text-[25px] leading-8">
        <a href="#help" className="text-[#217346] underline">More help on this function</a>
      </p>
    </div>
  </aside>
);

const StatusBar = () => (
  <footer className="flex h-[46px] shrink-0 items-stretch border-t-2 border-[#a3a3a3] bg-gradient-to-b from-[#e4e4e4] to-[#d5d5d5] text-[23px] text-[#505050]">
    <span className="flex items-center pl-10">Enter</span>
    <button aria-label="Record macro" className="ml-[42px]">
      <svg viewBox="0 0 30 30" className="size-[30px]">
        <circle cx="5" cy="5" r="5" fill="#5f5f5f" />
        <path d="M12 3h14v6M22 3v20q0 4-4 4H6M5 12v12M3 14h4" fill="none" stroke="#5f5f5f" strokeWidth="3" />
        <path d="M0 23h15l3 6H4q-4-1-4-6z" fill="#5f5f5f" />
      </svg>
    </button>
    <div className="ml-auto flex items-center">
      <button aria-label="Normal view" className="flex h-full w-[74px] items-center justify-center bg-[#9d9d9d]">
        <svg viewBox="0 0 26 26" className="size-[26px]">
          <path d="M1 1h24v24H1zM1 9h24M1 17h24M9 1v24M17 1v24" fill="none" stroke="#fff" strokeWidth="2" />
        </svg>
      </button>
      <button aria-label="Page layout view" className="ml-[21px]">
        <svg viewBox="0 0 28 26" className="h-[26px] w-7" fill="none" stroke="#5f5f5f">
          <path d="M1 1h26v24H1zM7 5h14v16H7z" strokeWidth="2" />
          <path d="M10 9h8M10 13h8M10 17h8" strokeWidth="1.5" />
        </svg>
      </button>
      <button aria-label="Page break view" className="ml-[43px]">
        <svg viewBox="0 0 28 26" className="h-[26px] w-7" fill="none" stroke="#5f5f5f" strokeWidth="2">
          <path d="M1 1h26v24H1zM9 1v14M17 1v14M1 15h16" />
        </svg>
      </button>
      <button aria-label="Zoom out" className="ml-[38px] h-1 w-4 bg-[#5f5f5f]" />
      <input
        type="range"
        aria-label="Zoom"
        min="0"
        max="100"
        defaultValue="50"
        className="mx-4 h-2 w-[196px] appearance-none rounded-full bg-[#9b9b9b] [&::-webkit-slider-thumb]:size-[23px] [&::-webkit-slider-thumb]:appearance-none [&::-webkit-slider-thumb]:rounded-full [&::-webkit-slider-thumb]:bg-white [&::-webkit-slider-thumb]:shadow-[0_0_2px_rgba(0,0,0,.5)]"
      />
      <button aria-label="Zoom in">
        <svg viewBox="0 0 16 16" className="size-4">
          <path d="M8 0v16M0 8h16" stroke="#5f5f5f" strokeWidth="4" />
        </svg>
      </button>
      <span className="w-[128px] pr-8 text-right">100%</span>
    </div>
  </footer>
);

export default function App() {
  return (
    <div className="flex h-screen flex-col overflow-hidden bg-white font-[Inter,sans-serif] text-black">
      <header className="shrink-0 bg-gradient-to-b from-[#347d54] to-[#217346]">
        <TitleBar />
        <RibbonTabs />
      </header>
      <Ribbon />
      <FormulaBar />
      <main className="flex min-h-0 flex-1">
        <div className="flex min-w-0 flex-1 flex-col">
          <Sheet />
          <SheetTabs />
        </div>
        <FormulaBuilder />
      </main>
      <StatusBar />
    </div>
  );
}
